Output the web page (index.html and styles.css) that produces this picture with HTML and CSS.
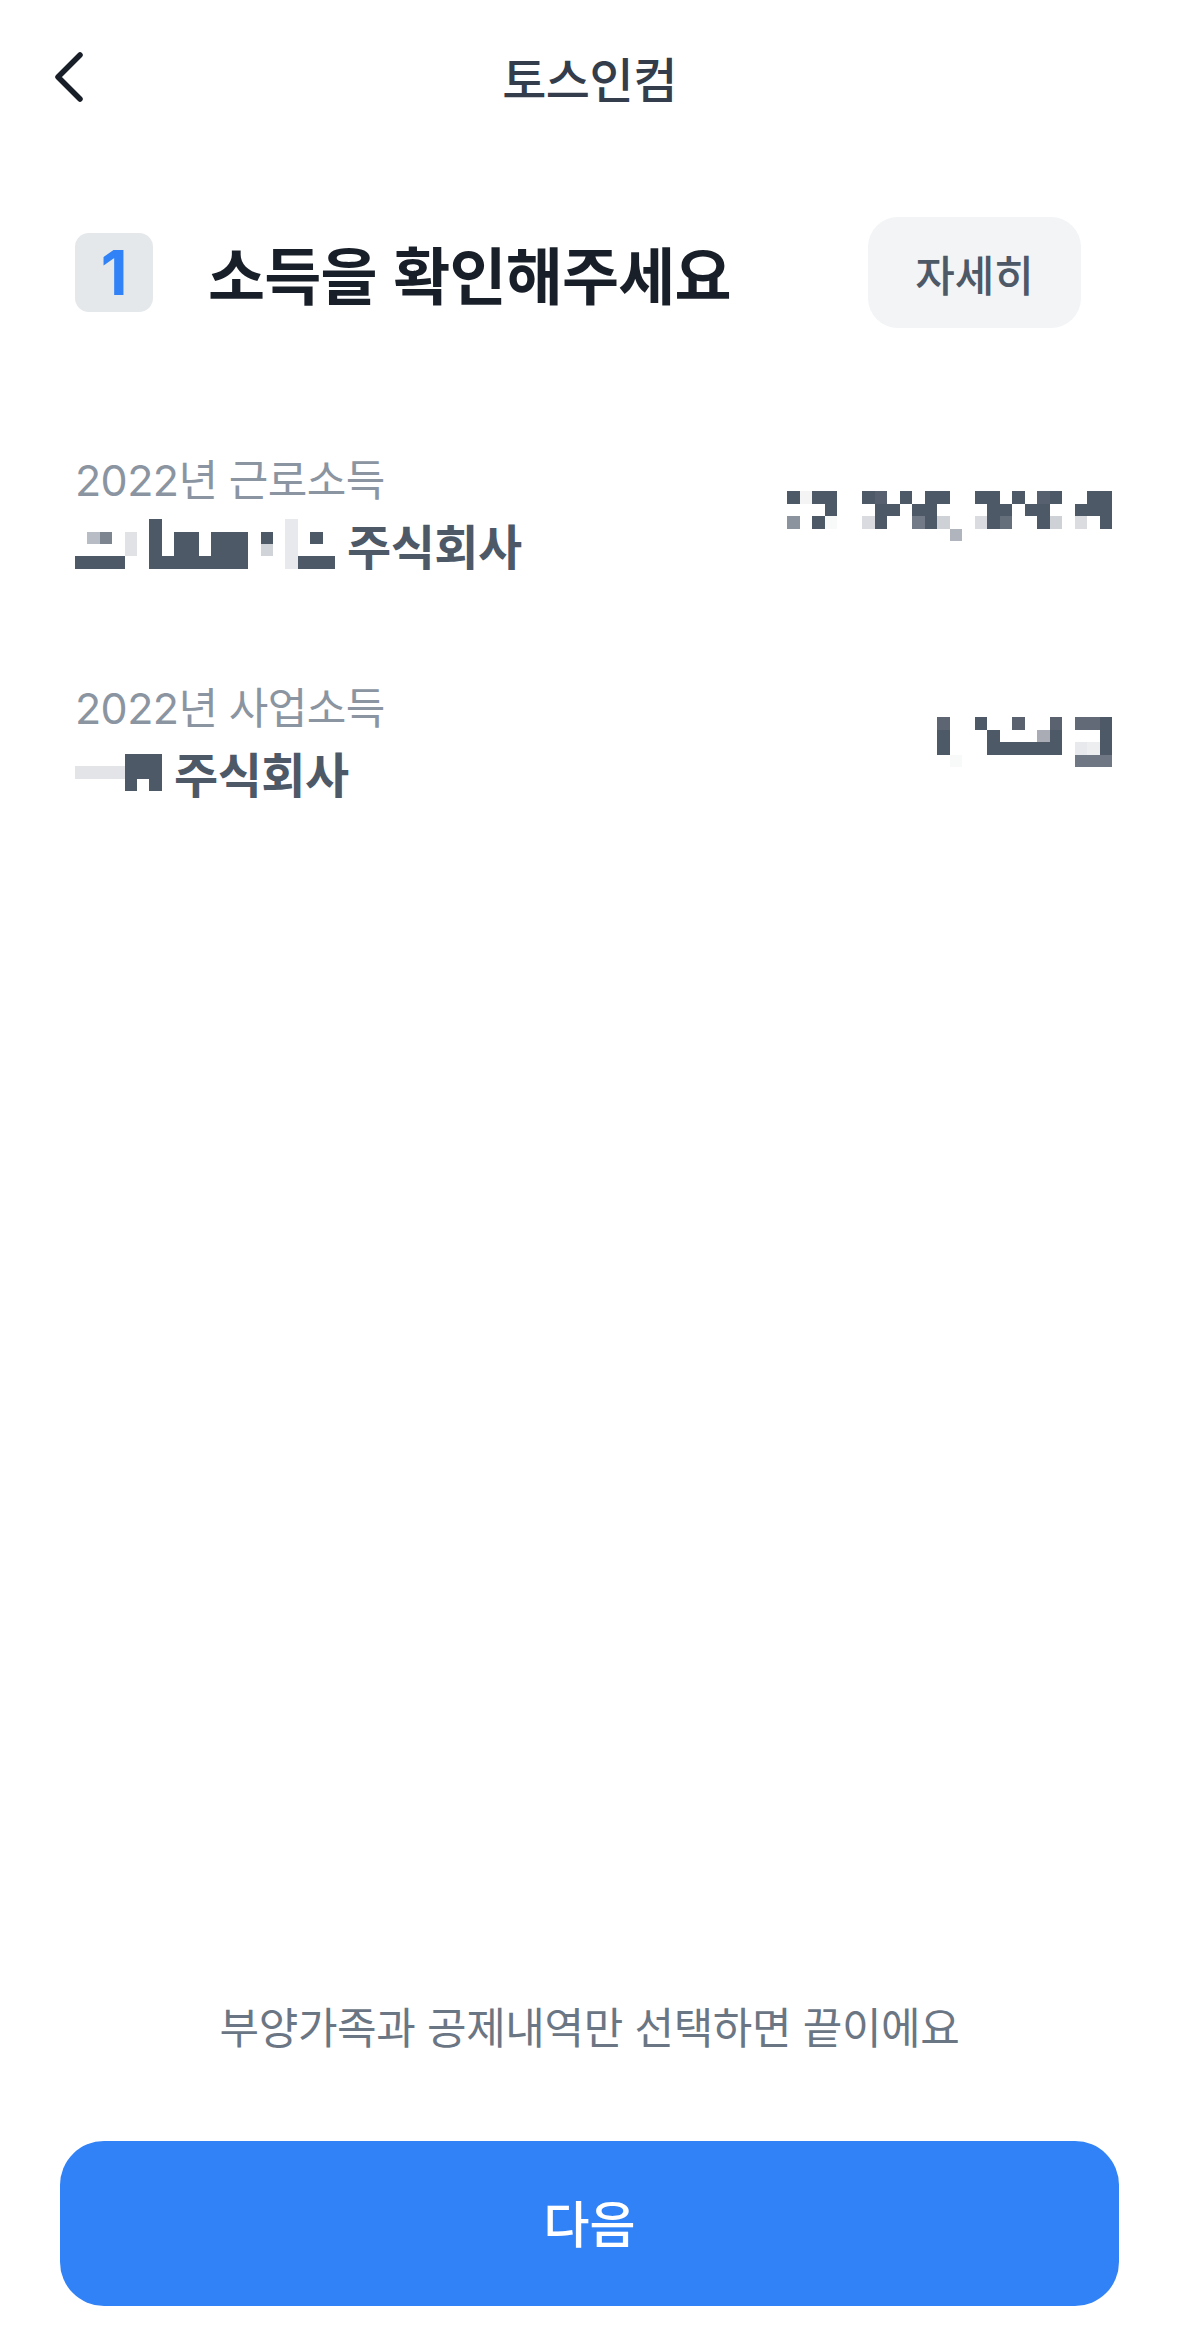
FILE: index.html
```html
<!DOCTYPE html>
<html lang="ko">
<head>
<meta charset="utf-8">
<title>토스인컴</title>
<link rel="stylesheet" href="styles.css">
</head>
<body>
<div class="page">
  <header class="nav">
    <div class="nav-left">
      <svg class="back" width="40" height="60" viewBox="0 0 40 60" aria-hidden="true">
        <polyline points="30,8 8,30 30,52" fill="none" stroke="#191f28" stroke-width="5.5" stroke-linecap="round" stroke-linejoin="round"/>
      </svg>
    </div>
    <div class="nav-title">토스인컴</div>
    <div class="nav-right"></div>
  </header>

  <main class="main">
    <section class="step-head">
      <div class="step-badge">1</div>
      <h1 class="step-title">소득을 확인해주세요</h1>
      <button class="detail-btn">자세히</button>
    </section>

    <section class="income-list">
      <div class="income-row">
        <div class="income-info">
          <div class="income-label">2022년 근로소득</div>
          <div class="income-company">
            <svg class="mosaic" width="260" height="50" viewBox="0 0 21 4" shape-rendering="crispEdges" aria-hidden="true">
              <rect x="6" y="0" width="1" height="1" fill="#4e5968"/>
              <rect x="17" y="0" width="1" height="4" fill="#e8e9ec"/>
              <rect x="1" y="1" width="1" height="1" fill="#b8bcc4"/>
              <rect x="2" y="1" width="1" height="1" fill="#7d8591"/>
              <rect x="4" y="1" width="1" height="2" fill="#e0e2e6"/>
              <rect x="6" y="1" width="1" height="2" fill="#4e5968"/>
              <rect x="8" y="1" width="2" height="2" fill="#4e5968"/>
              <rect x="11" y="1" width="3" height="2" fill="#4e5968"/>
              <rect x="15" y="1" width="1" height="1" fill="#4e5968"/>
              <rect x="19" y="1" width="1" height="1" fill="#4e5968"/>
              <rect x="15" y="2" width="1" height="1" fill="#d0d3d8"/>
              <rect x="0" y="3" width="4" height="1" fill="#4e5968"/>
              <rect x="6" y="3" width="8" height="1" fill="#4e5968"/>
              <rect x="18" y="3" width="3" height="1" fill="#4e5968"/>
            </svg>
            <span class="company-name">주식회사</span>
          </div>
        </div>
        <svg class="amount amount-1" width="325" height="50" viewBox="0 0 26 4" shape-rendering="crispEdges" aria-hidden="true">
          <rect x="0" y="0" width="1" height="1" fill="#4e5968"/>
          <rect x="1" y="0" width="1" height="1" fill="#f4f4f5"/>
          <rect x="2" y="0" width="2" height="1" fill="#4e5968"/>
          <rect x="6" y="0" width="1" height="1" fill="#4e5968"/>
          <rect x="7" y="0" width="1" height="1" fill="#56606e"/>
          <rect x="9" y="0" width="1" height="1" fill="#4e5968"/>
          <rect x="11" y="0" width="2" height="1" fill="#4e5968"/>
          <rect x="15" y="0" width="2" height="1" fill="#4e5968"/>
          <rect x="18" y="0" width="1" height="1" fill="#4e5968"/>
          <rect x="20" y="0" width="1" height="1" fill="#56606e"/>
          <rect x="21" y="0" width="1" height="1" fill="#4e5968"/>
          <rect x="24" y="0" width="2" height="1" fill="#4e5968"/>
          <rect x="3" y="1" width="1" height="1" fill="#4e5968"/>
          <rect x="7" y="1" width="2" height="1" fill="#4e5968"/>
          <rect x="10" y="1" width="2" height="1" fill="#4e5968"/>
          <rect x="16" y="1" width="2" height="1" fill="#4e5968"/>
          <rect x="19" y="1" width="2" height="1" fill="#4e5968"/>
          <rect x="23" y="1" width="3" height="1" fill="#4e5968"/>
          <rect x="0" y="2" width="1" height="1" fill="#8b939e"/>
          <rect x="2" y="2" width="1" height="1" fill="#4e5968"/>
          <rect x="3" y="2" width="1" height="1" fill="#f8f9f9"/>
          <rect x="6" y="2" width="1" height="1" fill="#d9dbe0"/>
          <rect x="7" y="2" width="1" height="1" fill="#4e5968"/>
          <rect x="10" y="2" width="1" height="1" fill="#737a87"/>
          <rect x="11" y="2" width="1" height="1" fill="#4e5968"/>
          <rect x="12" y="2" width="1" height="1" fill="#ced1d6"/>
          <rect x="15" y="2" width="1" height="1" fill="#d9dbe0"/>
          <rect x="16" y="2" width="1" height="1" fill="#4e5968"/>
          <rect x="17" y="2" width="1" height="1" fill="#656e7b"/>
          <rect x="20" y="2" width="1" height="1" fill="#4e5968"/>
          <rect x="21" y="2" width="1" height="1" fill="#ced1d6"/>
          <rect x="23" y="2" width="1" height="1" fill="#dadce0"/>
          <rect x="25" y="2" width="1" height="1" fill="#4e5968"/>
          <rect x="13" y="3" width="1" height="1" fill="#b0b4bc"/>
        </svg>
      </div>

      <div class="income-row">
        <div class="income-info">
          <div class="income-label">2022년 사업소득</div>
          <div class="income-company">
            <svg class="mosaic" width="87" height="37" viewBox="0 0 7 3" shape-rendering="crispEdges" aria-hidden="true">
              <rect x="0" y="1" width="4" height="1" fill="#e3e4e8"/>
              <rect x="4" y="0" width="3" height="2" fill="#4e5968"/>
              <rect x="4" y="2" width="1" height="1" fill="#4e5968"/>
              <rect x="6" y="2" width="1" height="1" fill="#4e5968"/>
            </svg>
            <span class="company-name">주식회사</span>
          </div>
        </div>
        <svg class="amount amount-2" width="175" height="50" viewBox="0 0 14 4" shape-rendering="crispEdges" aria-hidden="true">
          <rect x="0" y="0" width="1" height="1" fill="#5d6573"/>
          <rect x="3" y="0" width="1" height="1" fill="#4e5968"/>
          <rect x="6" y="0" width="1" height="1" fill="#5a6270"/>
          <rect x="9" y="0" width="1" height="1" fill="#5a6270"/>
          <rect x="11" y="0" width="2" height="1" fill="#626a77"/>
          <rect x="13" y="0" width="1" height="3" fill="#4e5968"/>
          <rect x="0" y="1" width="1" height="2" fill="#4e5968"/>
          <rect x="4" y="1" width="1" height="2" fill="#4e5968"/>
          <rect x="8" y="1" width="1" height="1" fill="#a9acb5"/>
          <rect x="9" y="1" width="1" height="2" fill="#4e5968"/>
          <rect x="5" y="2" width="4" height="1" fill="#4e5968"/>
          <rect x="11" y="2" width="1" height="1" fill="#e8e9ec"/>
          <rect x="12" y="2" width="1" height="1" fill="#eceef0"/>
          <rect x="1" y="3" width="1" height="1" fill="#f8f9f9"/>
          <rect x="11" y="3" width="3" height="1" fill="#707784"/>
        </svg>
      </div>
    </section>
  </main>

  <footer class="footer">
    <p class="footer-note">부양가족과 공제내역만 선택하면 끝이에요</p>
    <button class="next-btn">다음</button>
  </footer>
</div>
</body>
</html>
```

FILE: styles.css
```css
* {
  box-sizing: border-box;
}

html, body {
  margin: 0;
  padding: 0;
  background: #ffffff;
}

body {
  font-family: "Noto Sans CJK KR", "Noto Sans", sans-serif;
  color: #191f28;
}

.page {
  width: 1179px;
  height: 2329px;
  display: flex;
  flex-direction: column;
}

/* nav */
.nav {
  height: 154px;
  display: grid;
  grid-template-columns: 1fr auto 1fr;
  align-items: center;
}

.nav-left {
  padding-left: 50px;
  display: flex;
  align-items: center;
}

.back {
  display: block;
}

.nav-title {
  font-size: 48px;
  font-weight: 500;
  color: #333d4b;
  line-height: 64px;
  letter-spacing: -0.5px;
}

/* main */
.main {
  flex: 1;
  display: flex;
  flex-direction: column;
}

.step-head {
  margin-top: 63px;
  height: 111px;
  padding: 0 98px 0 75px;
  display: flex;
  align-items: center;
}

.step-badge {
  width: 78px;
  height: 79px;
  border-radius: 14px;
  background: #e5e8eb;
  color: #3182f6;
  font-family: "Inter", "Noto Sans CJK KR", sans-serif;
  font-weight: 700;
  font-size: 62px;
  line-height: 79px;
  text-align: center;
}

.step-title {
  margin: 0 0 0 55px;
  flex: 1;
  font-size: 62px;
  font-weight: 700;
  line-height: 84px;
  color: #191f28;
  letter-spacing: -0.8px;
}

.detail-btn {
  width: 213px;
  height: 111px;
  border: none;
  border-radius: 30px;
  background: #f2f4f6;
  color: #4e5968;
  font-family: "Noto Sans CJK KR", sans-serif;
  font-size: 43px;
  font-weight: 500;
  padding: 0;
}

.income-list {
  margin-top: 124px;
  padding: 0 67px 0 75px;
  display: flex;
  flex-direction: column;
  gap: 104px;
}

.income-row {
  display: flex;
  justify-content: space-between;
  align-items: flex-start;
}

.income-info {
  display: flex;
  flex-direction: column;
}

.income-label {
  font-family: "Inter", "Noto Sans CJK KR", sans-serif;
  font-size: 43px;
  line-height: 56px;
  color: #8b95a1;
  letter-spacing: -0.6px;
}

.income-company {
  margin-top: 4px;
  height: 64px;
  display: flex;
  align-items: center;
  gap: 12px;
}

.mosaic {
  display: block;
}

.company-name {
  font-size: 48px;
  font-weight: 700;
  color: #4e5968;
  line-height: 64px;
  letter-spacing: -0.5px;
}

.amount {
  display: block;
  margin-top: 39px;
}

.amount-2 {
  margin-top: 37px;
}

/* footer */
.footer {
  padding: 0 60px 23px;
  display: flex;
  flex-direction: column;
  align-items: stretch;
}

.footer-note {
  margin: 0;
  text-align: center;
  font-size: 43px;
  line-height: 56px;
  color: #6b7684;
  letter-spacing: -0.4px;
}

.next-btn {
  margin-top: 88px;
  height: 165px;
  border: none;
  border-radius: 44px;
  background: #3182f6;
  color: #ffffff;
  font-family: "Noto Sans CJK KR", sans-serif;
  font-size: 50px;
  font-weight: 500;
  padding: 0 0 6px;
}
```
